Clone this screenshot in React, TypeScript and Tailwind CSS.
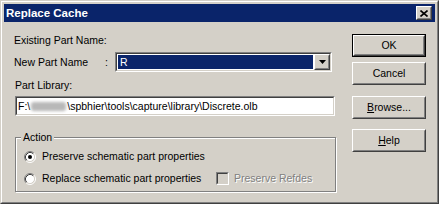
const raisedOuter = 'border border-t-white border-l-white border-b-[#404040] border-r-[#404040]'
const raisedInner = 'border border-t-[#d4d0c8] border-l-[#d4d0c8] border-b-[#808080] border-r-[#808080]'
const sunkenOuter = 'border border-t-[#808080] border-l-[#808080] border-b-white border-r-white'
const sunkenInner = 'border border-t-[#404040] border-l-[#404040] border-b-[#d4d0c8] border-r-[#d4d0c8]'

function CloseButton() {
  return (
    <div className={`w-[16px] h-[14px] bg-[#d4d0c8] ${raisedOuter}`}>
      <div className={`w-full h-full flex items-center justify-center ${raisedInner}`}>
        <svg width="8" height="7" viewBox="0 0 8 7">
          <path d="M0.5 0.5 L7.5 6.5 M7.5 0.5 L0.5 6.5" stroke="#000" strokeWidth="1.6" />
        </svg>
      </div>
    </div>
  )
}

function Button({ children, isDefault }: { children: React.ReactNode; isDefault?: boolean }) {
  const face = (
    <div className={`w-full h-full ${raisedOuter}`}>
      <div className={`w-full h-full flex items-center justify-center ${raisedInner}`}>{children}</div>
    </div>
  )
  return (
    <div className={`w-[74px] h-[23px] bg-[#d4d0c8] ${isDefault ? 'border border-black' : ''}`}>{face}</div>
  )
}

function Radio({ checked }: { checked?: boolean }) {
  return (
    <svg width="12" height="12" viewBox="0 0 12 12" className="shrink-0">
      <circle cx="6" cy="6" r="4.5" fill="#fff" />
      <path d="M2.11 9.89 A5.5 5.5 0 0 1 9.89 2.11" fill="none" stroke="#808080" />
      <path d="M9.89 2.11 A5.5 5.5 0 0 1 2.11 9.89" fill="none" stroke="#fff" />
      <path d="M2.82 9.18 A4.5 4.5 0 0 1 9.18 2.82" fill="none" stroke="#404040" />
      <path d="M9.18 2.82 A4.5 4.5 0 0 1 2.82 9.18" fill="none" stroke="#d4d0c8" />
      {checked && <circle cx="6" cy="6" r="2" fill="#000" />}
    </svg>
  )
}

export default function App() {
  return (
    <div className="w-[443px] h-[208px] bg-white font-['Liberation_Sans',Arial,sans-serif] text-[10.5px] leading-[13px] text-black">
      <div className="w-[439px] h-[204px] bg-[#d4d0c8] border border-t-[#d4d0c8] border-l-[#d4d0c8] border-b-[#404040] border-r-[#404040]">
        <div className="h-full flex flex-col p-[2px] border border-t-white border-l-white border-b-[#808080] border-r-[#808080]">
          {/* title bar */}
          <div className="h-[18px] shrink-0 bg-[#0a246a] flex items-center justify-between pl-[2px] pr-[3px]">
            <span className="text-white font-bold text-[11.5px] leading-[14px]">Replace Cache</span>
            <CloseButton />
          </div>

          <div className="flex pl-[10px] pt-[12px]">
            {/* left column */}
            <div className="w-[322px] flex flex-col">
              <div>Existing Part Name:</div>

              <div className="flex items-center mt-[5px] h-[20px]">
                <span className="w-[91px]">New Part Name</span>
                <span className="w-[10px]">:</span>
                <div className={`w-[217px] h-[20px] ${sunkenOuter}`}>
                  <div className={`h-full flex bg-white ${sunkenInner}`}>
                    <div className="flex-1 m-[1px] bg-[#0a246a] text-white pl-[2px] flex items-center">R</div>
                    <div className={`w-[16px] h-[16px] bg-[#d4d0c8] ${raisedOuter}`}>
                      <div className={`w-full h-full flex items-center justify-center ${raisedInner}`}>
                        <svg width="7" height="4" viewBox="0 0 7 4">
                          <path d="M0 0 H7 L3.5 4 Z" fill="#000" />
                        </svg>
                      </div>
                    </div>
                  </div>
                </div>
              </div>

              <div className="mt-[7px] pl-[1px]">Part Library:</div>

              <div className={`ml-[1px] mt-[4px] w-[320px] h-[20px] ${sunkenOuter}`}>
                <div className={`h-full bg-white flex items-center pl-[1px] whitespace-nowrap ${sunkenInner}`}>
                  <span>F:\</span>
                  {/* blurred-out folder name */}
                  <span className="inline-block w-[35px] h-[9px] mx-[1px] rounded-[3px] bg-[#b8b8b8] blur-[1.5px]" />
                  <span>\spbhier\tools\capture\library\Discrete.olb</span>
                </div>
              </div>

              {/* Action group */}
              <div className="relative ml-[1px] mt-[21px] w-[321px] h-[55px] border border-[#808080] shadow-[1px_1px_0_#fff,inset_1px_1px_0_#fff] pl-[8px] pt-[12px]">
                <span className="absolute -top-[7px] left-[5px] px-[2px] bg-[#d4d0c8]">Action</span>
                <div className="flex items-center gap-[6px] h-[13px]">
                  <Radio checked />
                  <span>Preserve schematic part properties</span>
                </div>
                <div className="flex items-center h-[13px] mt-[9px]">
                  <div className="w-[192px] flex items-center gap-[6px]">
                    <Radio />
                    <span>Replace schematic part properties</span>
                  </div>
                  <div className={`w-[13px] h-[13px] ${sunkenOuter}`}>
                    <div className={`w-full h-full bg-[#d4d0c8] ${sunkenInner}`} />
                  </div>
                  <span className="ml-[5px] text-[#808080] [text-shadow:1px_1px_0_#fff]">Preserve Refdes</span>
                </div>
              </div>
            </div>

            {/* buttons */}
            <div className="ml-[16px] flex flex-col">
              <Button isDefault>OK</Button>
              <div className="mt-[5px]">
                <Button>Cancel</Button>
              </div>
              <div className="mt-[11px]">
                <Button>
                  <span><u>B</u>rowse...</span>
                </Button>
              </div>
              <div className="mt-[10px]">
                <Button>
                  <span><u>H</u>elp</span>
                </Button>
              </div>
            </div>
          </div>
        </div>
      </div>
    </div>
  )
}
